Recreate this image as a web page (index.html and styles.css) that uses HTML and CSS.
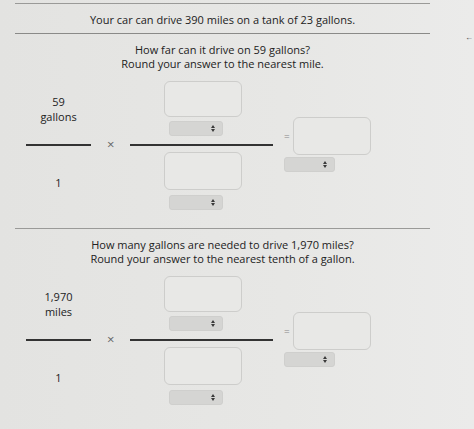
FILE: index.html
```html
<!DOCTYPE html>
<html>
<head>
<meta charset="utf-8">
<link rel="stylesheet" href="styles.css">
</head>
<body>
<div class="page">
  <div class="problem">Your car can drive 390 miles on a tank of 23 gallons.</div>

  <section class="part">
    <p class="q">How far can it drive on 59 gallons?<br>Round your answer to the nearest mile.</p>
    <div class="eq">
      <div class="frac given">
        <div class="num"><span>59</span><span>gallons</span></div>
        <div class="bar"></div>
        <div class="den">1</div>
      </div>
      <span class="times">×</span>
      <div class="frac blank">
        <div class="num"><div class="slot"><div class="box"></div><div class="sel"><span class="arr"></span></div></div></div>
        <div class="bar"></div>
        <div class="den"><div class="slot"><div class="box tall"></div><div class="sel"><span class="arr"></span></div></div></div>
      </div>
      <div class="answer">
        <div class="arow"><span class="eqs">=</span><div class="box tall"></div></div>
        <div class="sel short"><span class="arr"></span></div>
      </div>
    </div>
  </section>

  <section class="part second">
    <p class="q">How many gallons are needed to drive 1,970 miles?<br>Round your answer to the nearest tenth of a gallon.</p>
    <div class="eq">
      <div class="frac given">
        <div class="num"><span>1,970</span><span>miles</span></div>
        <div class="bar"></div>
        <div class="den">1</div>
      </div>
      <span class="times">×</span>
      <div class="frac blank">
        <div class="num"><div class="slot"><div class="box"></div><div class="sel"><span class="arr"></span></div></div></div>
        <div class="bar"></div>
        <div class="den"><div class="slot"><div class="box tall"></div><div class="sel"><span class="arr"></span></div></div></div>
      </div>
      <div class="answer">
        <div class="arow"><span class="eqs">=</span><div class="box tall"></div></div>
        <div class="sel short"><span class="arr"></span></div>
      </div>
    </div>
  </section>

  <span class="edge">&#8592;</span>
</div>
</body>
</html>
```
FILE: styles.css
```css
* { box-sizing: border-box; }
html, body { margin: 0; padding: 0; }
body {
  width: 474px;
  height: 429px;
  overflow: hidden;
  background: linear-gradient(90deg, #e3e3e1 0%, #e7e7e5 60%, #ebebea 100%);
  font-family: "Open Sans", "Liberation Sans", sans-serif;
  font-size: 11px;
  font-weight: 500;
  color: #222;
}
.page {
  position: relative;
  width: 474px;
  height: 429px;
  padding: 3px 44px 0 15px;
}
.problem {
  border-top: 1px solid #9a9a98;
  border-bottom: 1px solid #8a8a88;
  height: 31px;
  display: flex;
  align-items: center;
  justify-content: center;
  padding-top: 2px;
}
.part { height: 194px; }
.part.second { border-top: 1px solid #9a9a98; height: auto; }
.q {
  margin: 0;
  padding-top: 9px;
  text-align: center;
  line-height: 14px;
}
.eq {
  display: flex;
  align-items: center;
  margin-top: 9px;
  padding-left: 11px;
}
.frac { display: flex; flex-direction: column; }
.frac .bar { height: 1.5px; background: #333; }
.frac .num, .frac .den { height: 64px; display: flex; flex-direction: column; align-items: center; }
.given { width: 65px; }
.given .num { justify-content: center; padding-bottom: 7px; line-height: 15px; }
.given .den { padding-top: 29px; line-height: 15px; }
.times { width: 8px; margin: 0 15px 0 16px; color: #666; font-size: 13px; font-weight: 400; line-height: 1; }
.blank { width: 143px; }
.blank .num { justify-content: flex-end; padding-bottom: 8px; }
.blank .den { justify-content: flex-start; padding-top: 6px; }
.slot { width: 78px; display: flex; flex-direction: column; gap: 4px; margin-left: 2px; }
.den .slot { gap: 5px; }
.box {
  width: 78px;
  height: 36px;
  border: 1px solid #cdcdcb;
  border-radius: 6px;
  background: #e8e8e6;
}
.box.tall { height: 38px; }
.sel {
  position: relative;
  width: 54px;
  height: 15px;
  margin-left: 5px;
  background: #d5d5d3;
  border: 1px solid #cfcfcd;
  border-radius: 3px;
}
.sel.short { width: 51px; margin-left: 0; }
.arr {
  position: absolute;
  right: 6px;
  top: 3px;
  width: 5px;
  height: 7px;
}
.arr::before, .arr::after {
  content: "";
  position: absolute;
  left: 0;
  border-left: 2.5px solid transparent;
  border-right: 2.5px solid transparent;
}
.arr::before { top: 0; border-bottom: 3px solid #3a3a3a; }
.arr::after { bottom: 0; border-top: 3px solid #3a3a3a; }
.answer {
  display: flex;
  flex-direction: column;
  gap: 2px;
  margin-left: 11px;
}
.arow { display: flex; align-items: center; gap: 3px; }
.eqs { color: #888; font-size: 10px; line-height: 1; }
.edge {
  position: absolute;
  right: 1px;
  top: 31px;
  font-size: 8px;
  color: #444;
}
```
